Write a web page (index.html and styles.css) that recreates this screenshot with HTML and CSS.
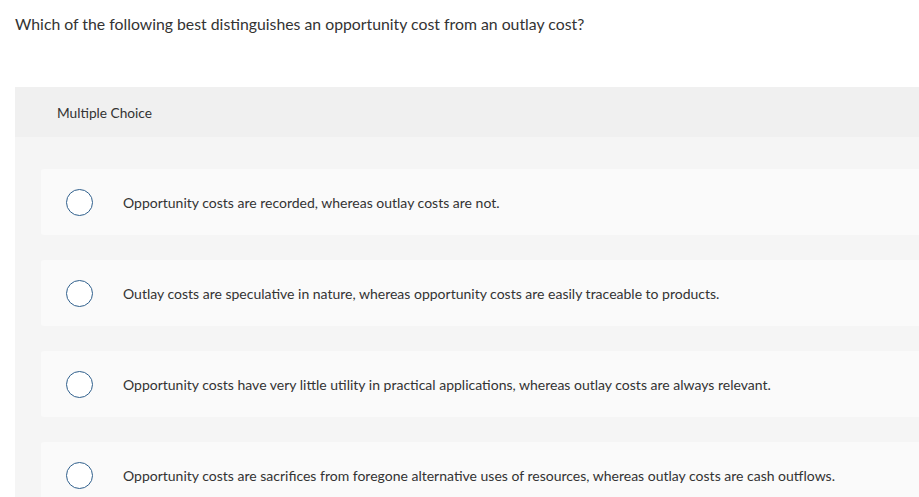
FILE: index.html
```html
<!DOCTYPE html>
<html>
<head>
<meta charset="utf-8">
<link rel="stylesheet" href="styles.css">
</head>
<body>
<div class="question">Which of the following best distinguishes an opportunity cost from an outlay cost?</div>
<div class="panel">
  <div class="panel-head">Multiple Choice</div>
  <div class="panel-body">
    <div class="option"><span class="radio"></span><span class="label">Opportunity costs are recorded, whereas outlay costs are not.</span></div>
    <div class="option"><span class="radio"></span><span class="label">Outlay costs are speculative in nature, whereas opportunity costs are easily traceable to products.</span></div>
    <div class="option"><span class="radio"></span><span class="label">Opportunity costs have very little utility in practical applications, whereas outlay costs are always relevant.</span></div>
    <div class="option"><span class="radio"></span><span class="label">Opportunity costs are sacrifices from foregone alternative uses of resources, whereas outlay costs are cash outflows.</span></div>
  </div>
</div>
</body>
</html>
```
FILE: styles.css
```css
html, body {
  margin: 0;
  padding: 0;
  background: #ffffff;
  overflow: hidden;
}
body {
  font-family: Lato, "Liberation Sans", sans-serif;
  color: #333333;
  width: 919px;
  height: 497px;
}
.question {
  font-size: 15.8px;
  line-height: 20px;
  padding: 14px 0 0 15px;
  height: 87px;
  box-sizing: border-box;
}
.panel {
  margin-left: 15px;
  background: #f5f5f5;
}
.panel-head {
  background: #f0f0f0;
  height: 50px;
  display: flex;
  align-items: center;
  padding-left: 42px;
  font-size: 13.7px;
}
.panel-body {
  padding: 32px 0 40px 26px;
  display: flex;
  flex-direction: column;
  gap: 25px;
}
.option {
  background: #fafafa;
  height: 66px;
  border-radius: 3px 0 0 3px;
  display: flex;
  align-items: center;
  padding-left: 25px;
}
.radio {
  width: 25px;
  height: 25px;
  border: 1.5px solid #2f5f8c;
  border-radius: 50%;
  background: #ffffff;
  flex: none;
  margin-top: 1px;
}
.label {
  margin-left: 30px;
  font-size: 14px;
}
```
